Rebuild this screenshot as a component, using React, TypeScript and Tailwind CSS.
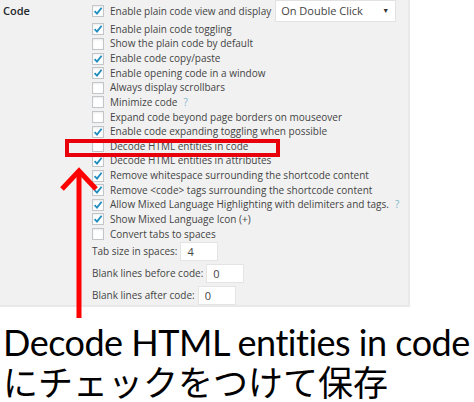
import React from "react";

type Opt = { label: React.ReactNode; checked: boolean; help?: boolean };

const options: Opt[] = [
  { label: "Enable plain code toggling", checked: true },
  { label: "Show the plain code by default", checked: false },
  { label: "Enable code copy/paste", checked: true },
  { label: "Enable opening code in a window", checked: true },
  { label: "Always display scrollbars", checked: false },
  { label: "Minimize code", checked: false, help: true },
  { label: "Expand code beyond page borders on mouseover", checked: false },
  { label: "Enable code expanding toggling when possible", checked: true },
  { label: "Decode HTML entities in code", checked: false },
  { label: "Decode HTML entities in attributes", checked: true },
  { label: "Remove whitespace surrounding the shortcode content", checked: true },
  { label: "Remove <code> tags surrounding the shortcode content", checked: true },
  { label: "Allow Mixed Language Highlighting with delimiters and tags.", checked: true, help: true },
  { label: "Show Mixed Language Icon (+)", checked: true },
  { label: "Convert tabs to spaces", checked: false },
];

const numbers = [
  { label: "Tab size in spaces:", value: "4" },
  { label: "Blank lines before code:", value: "0" },
  { label: "Blank lines after code:", value: "0" },
];

function Checkbox({ checked }: { checked: boolean }) {
  return (
    <span className="w-[12px] h-[12px] shrink-0 bg-white border border-[#c3c6c9] shadow-[inset_0_1px_2px_rgba(0,0,0,0.08)] flex items-center justify-center">
      {checked && (
        <svg width="10" height="10" viewBox="0 0 10 10">
          <path d="M1.6 5.2 L4 7.6 L8.6 1.8" fill="none" stroke="#1e8cbe" strokeWidth="1.8" />
        </svg>
      )}
    </span>
  );
}

function Help() {
  return <span className="ml-[6px] text-[#82b5cf]">?</span>;
}

export default function App() {
  return (
    <div className="w-[474px] h-[402px] bg-white relative overflow-hidden text-[#444] font-['Open_Sans',sans-serif]">
      {/* Settings panel */}
      <div className="w-[410px] h-[307px] bg-[#f1f1f1] border-r-2 border-b-2 border-[#e9e9e9] flex text-[10px]">
        <div className="w-[92px] pl-[3px] pt-[3px] font-semibold text-[#23282d] text-[11px]">Code</div>

        <div className="flex flex-col">
          <div className="h-[22.7px] flex items-center gap-[6px]">
            <Checkbox checked />
            <span className="whitespace-nowrap">Enable plain code view and display</span>
            <div className="ml-[-2px] w-[121px] h-[22px] bg-white border border-[#e2e2e2] flex items-center justify-between pl-[5px] pr-[6px] text-[11px]">
              <span>On Double Click</span>
              <span className="text-[7px] text-[#333]">▼</span>
            </div>
          </div>

          {options.map((o, i) => (
            <div key={i} className="h-[14.64px] flex items-center gap-[6px] whitespace-nowrap">
              <Checkbox checked={o.checked} />
              <span>
                {o.label}
                {o.help && <Help />}
              </span>
            </div>
          ))}

          <div className="flex flex-col gap-[3px] mt-[1px]">
            {numbers.map((n) => (
              <div key={n.label} className="h-[19px] flex items-center gap-[3px] whitespace-nowrap">
                <span>{n.label}</span>
                <span className="w-[38px] h-[19px] bg-white border border-[#e4e4e4] flex items-center pl-[6px] text-[11px]">
                  {n.value}
                </span>
              </div>
            ))}
          </div>
        </div>
      </div>

      {/* Caption */}
      <div className="pl-[3px] pt-[15px] text-black">
        <div className="text-[36px] leading-[40px] tracking-[-0.5px] whitespace-nowrap font-['Lato',sans-serif]">
          Decode HTML entities in code
        </div>
        <div className="text-[35px] leading-[38px] whitespace-nowrap font-['Noto_Sans_CJK_JP',sans-serif]">
          にチェックをつけて保存
        </div>
      </div>

      {/* Highlight box */}
      <div className="absolute left-[65px] top-[139px] w-[215px] h-[18px] border-[4px] border-[#e8000b]" />

      {/* Arrow */}
      <svg className="absolute left-0 top-0" width="474" height="402" viewBox="0 0 474 402">
        <line x1="79" y1="172" x2="79" y2="318" stroke="#f00" strokeWidth="5" />
        <polyline points="62,189 79,171 96,189" fill="none" stroke="#f00" strokeWidth="5" />
      </svg>
    </div>
  );
}
